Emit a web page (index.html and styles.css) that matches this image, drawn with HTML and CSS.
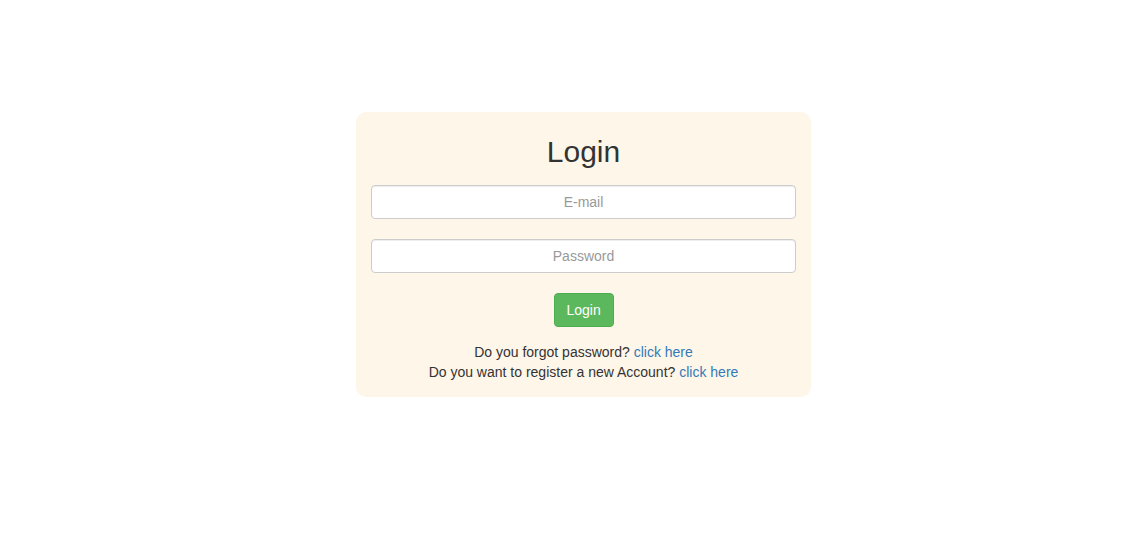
FILE: index.html
```html
<!DOCTYPE html>
<html>
<head>
<meta charset="utf-8">
<link rel="stylesheet" href="styles.css">
</head>
<body>
<div class="page">
  <div class="card">
    <h2 class="title">Login</h2>
    <form class="form">
      <input class="field" type="email" placeholder="E-mail">
      <input class="field" type="password" placeholder="Password">
      <button class="btn" type="button">Login</button>
    </form>
    <div class="links">
      <div>Do you forgot password? <a href="#">click here</a></div>
      <div>Do you want to register a new Account? <a href="#">click here</a></div>
    </div>
  </div>
</div>
</body>
</html>
```
FILE: styles.css
```css
html, body {
  margin: 0;
  padding: 0;
  background: #fff;
  font-family: "Liberation Sans", Arial, Helvetica, sans-serif;
  font-size: 14px;
  line-height: 20px;
  color: #333;
}
.page {
  display: flex;
  justify-content: center;
  padding-top: 112px;
  padding-left: 28px;
}
.card {
  width: 455px;
  box-sizing: border-box;
  background: #fff6ea;
  border-radius: 10px;
  padding: 0 15px 15px;
  text-align: center;
}
.title {
  margin: 23px 0 17px;
  font-size: 30px;
  font-weight: 500;
  line-height: 33px;
  color: #333;
}
.form {
  display: flex;
  flex-direction: column;
  align-items: center;
  gap: 20px;
  margin: 0;
}
.field {
  display: block;
  width: 100%;
  height: 34px;
  box-sizing: border-box;
  padding: 6px 12px;
  font-family: inherit;
  font-size: 14px;
  color: #555;
  text-align: center;
  background: #fff;
  border: 1px solid #ccc;
  border-radius: 4px;
  box-shadow: inset 0 1px 1px rgba(0,0,0,.075);
  outline: none;
}
.field::placeholder {
  color: #999;
}
.btn {
  height: 34px;
  width: 60px;
  padding: 6px 12px;
  font-family: inherit;
  font-size: 14px;
  line-height: 20px;
  color: #fff;
  background: #5cb85c;
  border: 1px solid #4cae4c;
  border-radius: 4px;
}
.links {
  margin-top: 15px;
}
.links a {
  color: #337ab7;
  text-decoration: none;
}
```
